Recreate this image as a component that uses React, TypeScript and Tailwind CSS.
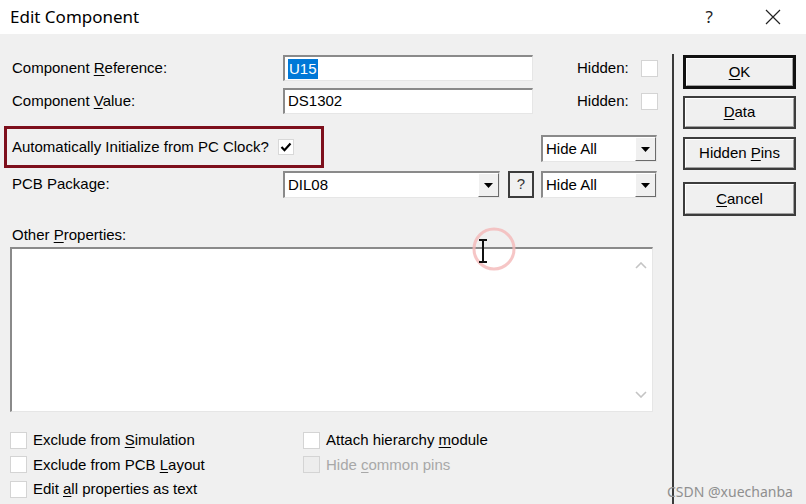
import React from 'react';

const font = { fontFamily: '"Liberation Sans", Arial, sans-serif' };

function Sunken({ className = '', children }: { className?: string; children?: React.ReactNode }) {
  return (
    <div
      className={`border-t-2 border-l-2 border-b border-r border-t-[#8a8a8a] border-l-[#8a8a8a] border-b-[#e6e6e6] border-r-[#e6e6e6] bg-white ${className}`}
    >
      {children}
    </div>
  );
}

function Arrow() {
  return (
    <div className="flex h-full w-[21px] items-center justify-center border-l border-t border-l-white border-t-white border-b border-r border-b-[#6b6b6b] border-r-[#6b6b6b] bg-[#f0f0f0]">
      <svg width="9" height="5" viewBox="0 0 9 5">
        <path d="M0 0 H9 L4.5 5 Z" fill="#000" />
      </svg>
    </div>
  );
}

function Combo({ text, width }: { text: string; width: string }) {
  return (
    <Sunken className={`flex h-[27px] items-stretch ${width}`}>
      <div className="flex flex-1 items-center pl-[3px] text-[15px] text-black">{text}</div>
      <Arrow />
    </Sunken>
  );
}

function Box({ disabled = false }: { disabled?: boolean }) {
  return (
    <div
      className={`h-[17px] w-[17px] shrink-0 border border-[#d4d4d4] ${disabled ? 'bg-[#ededed]' : 'bg-white'}`}
    />
  );
}

function Btn({ children, def = false, className = '' }: { children: React.ReactNode; def?: boolean; className?: string }) {
  return (
    <div
      className={`flex w-[113px] items-center justify-center bg-[#f0f0f0] text-[15px] text-black ${
        def ? 'border-[3px] border-[#111]' : 'border-2 border-[#3c3c3c]'
      } ${className}`}
    >
      <div className="flex h-full w-full items-center justify-center border-t border-l border-t-white border-l-white border-b border-r border-b-[#a0a0a0] border-r-[#a0a0a0]">
        {children}
      </div>
    </div>
  );
}

function CheckRow({ label, disabled = false }: { label: React.ReactNode; disabled?: boolean }) {
  return (
    <div className="flex h-[24.5px] items-center gap-[6px]">
      <Box disabled={disabled} />
      <span className={`text-[15px] ${disabled ? 'text-[#a8a8a8]' : 'text-black'}`}>{label}</span>
    </div>
  );
}

export default function App() {
  return (
    <div className="relative h-[504px] w-[806px] overflow-hidden bg-[#f0f0f0]" style={font}>
      {/* Title bar */}
      <div className="flex h-[34px] items-center bg-white">
        <span className="pl-[10px] text-[17px] text-black" style={{ fontFamily: '"Noto Sans", "Open Sans", sans-serif' }}>
          Edit Component
        </span>
        <div className="flex-1" />
        <span className="mr-[52px] text-[17px] text-[#222]" style={{ fontFamily: '"Noto Sans", sans-serif' }}>?</span>
        <svg width="16" height="16" viewBox="0 0 16 16" className="mr-[25px]">
          <path d="M1 1 L15 15 M15 1 L1 15" stroke="#222" strokeWidth="1.2" />
        </svg>
      </div>

      <div className="flex h-[470px]">
        {/* Main area */}
        <div className="w-[672px] pl-[10px] pt-[21px]">
          <div className="flex h-[26px] items-center">
            <span className="w-[273px] pl-[2px] text-[15px] text-black">
              Component <u className="underline-offset-2">R</u>eference:
            </span>
            <Sunken className="flex h-[26px] w-[250px] items-center pl-[3px]">
              <span className="bg-[#0078d7] px-[1px] text-[15px] leading-[20px] text-white">U15</span>
            </Sunken>
            <span className="ml-[44px] text-[15px] text-black">Hidden:</span>
            <div className="ml-[12px]"><Box /></div>
          </div>

          <div className="mt-[7px] flex h-[26px] items-center">
            <span className="w-[273px] pl-[2px] text-[15px] text-black">
              Component <u className="underline-offset-2">V</u>alue:
            </span>
            <Sunken className="flex h-[26px] w-[250px] items-center pl-[3px]">
              <span className="text-[15px] text-black">DS1302</span>
            </Sunken>
            <span className="ml-[44px] text-[15px] text-black">Hidden:</span>
            <div className="ml-[12px]"><Box /></div>
          </div>

          <div className="mt-[12px] flex h-[42px] items-center">
            <div className="-ml-[6px] flex h-[42px] w-[320px] items-center border-[3px] border-[#7d0f1c] pl-[5px]">
              <span className="text-[15px] text-black">Automatically Initialize from PC Clock?</span>
              <div className="ml-[9px] flex h-[16px] w-[16px] items-center justify-center border border-[#d8d8d8] bg-white">
                <svg width="12" height="10" viewBox="0 0 12 10">
                  <path d="M1.5 5 L4.5 8.2 L10.5 1.5" stroke="#000" strokeWidth="2.2" fill="none" />
                </svg>
              </div>
            </div>
            <div className="ml-[217px] mt-[3px]">
              <Combo text="Hide All" width="w-[116px]" />
            </div>
          </div>

          <div className="mt-[3px] flex h-[27px] items-center">
            <span className="w-[273px] pl-[2px] text-[15px] text-black">PCB Package:</span>
            <Combo text="DIL08" width="w-[217px]" />
            <div className="ml-[8px] flex h-[27px] w-[26px] items-center justify-center border-2 border-[#3c3c3c] bg-[#f0f0f0] text-[15px] text-[#333]">
              ?
            </div>
            <div className="ml-[7px]">
              <Combo text="Hide All" width="w-[116px]" />
            </div>
          </div>

          <div className="mt-[28px] h-[18px] pl-[2px] text-[15px] leading-[18px] text-black">
            Other <u className="underline-offset-2">P</u>roperties:
          </div>

          <Sunken className="mt-[3px] flex h-[165px] w-[643px] justify-end">
            <div className="flex w-[22px] flex-col items-center justify-between py-[13px]">
              <svg width="12" height="7" viewBox="0 0 12 7">
                <path d="M1 6 L6 1 L11 6" stroke="#c4c4c4" strokeWidth="1.6" fill="none" />
              </svg>
              <svg width="12" height="7" viewBox="0 0 12 7">
                <path d="M1 1 L6 6 L11 1" stroke="#c4c4c4" strokeWidth="1.6" fill="none" />
              </svg>
            </div>
          </Sunken>

          <div className="mt-[16px] flex">
            <div className="w-[293px]">
              <CheckRow label={<>Exclude from <u className="underline-offset-2">S</u>imulation</>} />
              <CheckRow label={<>Exclude from PCB <u className="underline-offset-2">L</u>ayout</>} />
              <CheckRow label={<>Edit <u className="underline-offset-2">a</u>ll properties as text</>} />
            </div>
            <div>
              <CheckRow label={<>Attach hierarchy <u className="underline-offset-2">m</u>odule</>} />
              <CheckRow disabled label={<>Hide <u className="underline-offset-2">c</u>ommon pins</>} />
            </div>
          </div>
        </div>

        {/* Separator */}
        <div className="mt-[20px] w-[2px] bg-[#3a3a3a]" />

        {/* Buttons */}
        <div className="flex flex-col pl-[9px] pt-[21px]">
          <Btn def className="h-[34px]">
            <u className="underline-offset-2">O</u>K
          </Btn>
          <Btn className="mt-[7px] h-[33px]">
            <u className="underline-offset-2">D</u>ata
          </Btn>
          <Btn className="mt-[8px] h-[33px]">
            Hidden&nbsp;<u className="underline-offset-2">P</u>ins
          </Btn>
          <Btn className="mt-[12px] h-[34px]">
            <u className="underline-offset-2">C</u>ancel
          </Btn>
        </div>
      </div>

      {/* Mouse cursor highlight */}
      <svg width="50" height="50" viewBox="0 0 50 50" className="pointer-events-none absolute left-[469px] top-[224px]">
        <circle cx="25" cy="25" r="20" stroke="#f4b8b8" strokeWidth="3" fill="none" opacity="0.8" />
        <path d="M10 16 H18 M14 16 V38 M10 38 H18" stroke="#111" strokeWidth="2" fill="none" />
      </svg>

      {/* Watermark */}
      <span className="absolute left-[667px] top-[481px] text-[14px] text-[#8f8f8f]" style={{ fontFamily: '"Noto Sans", sans-serif' }}>
        CSDN @xuechanba
      </span>
    </div>
  );
}
